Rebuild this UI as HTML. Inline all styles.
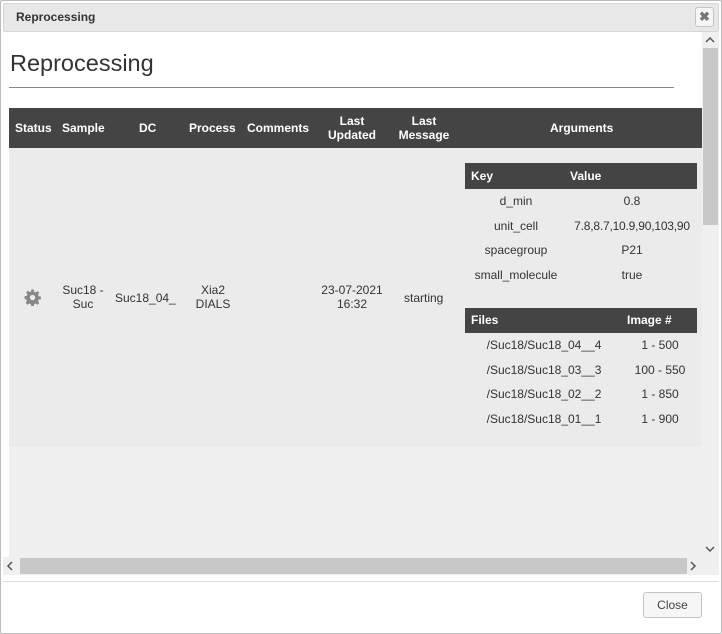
<!DOCTYPE html>
<html><head><meta charset="utf-8"><style>
*{margin:0;padding:0;box-sizing:border-box}
body{width:722px;height:634px;background:#fff;font-family:"Liberation Sans",Arial,sans-serif;font-size:12px;color:#333;position:relative;overflow:hidden}
.a{position:absolute}
.c{text-align:center}
.hd{color:#fff;font-weight:bold}
</style></head><body>
<div class="a" style="left:0;top:0;width:722px;height:634px;border:1px solid #bbb;border-radius:2px"></div>
<div class="a" style="left:3px;top:3px;width:716px;height:29px;background:#e8e8e8;border:1px solid #d6d6d6;border-radius:2px"></div>
<div class="a" style="left:16px;top:10px;font-size:12px;font-weight:bold;color:#333">Reprocessing</div>
<div class="a" style="left:695px;top:7px;width:19px;height:20px;border:1px solid #c5c5c5;border-radius:3px;background:#f6f6f6;color:#777;font-size:13px;font-weight:bold;text-align:center;line-height:17px">✖</div>

<div class="a" style="left:10px;top:50px;font-size:23.5px;color:#333">Reprocessing</div>
<div class="a" style="left:9px;top:87px;width:665px;height:1px;background:#888"></div>

<div class="a" style="left:9px;top:148px;width:693px;height:409px;background:#f0f0f0"></div>
<div class="a" style="left:9px;top:108px;width:693px;height:40px;background:#444"></div>
<div class="a hd" style="left:15px;top:121px">Status</div>
<div class="a hd" style="left:62px;top:121px">Sample</div>
<div class="a hd" style="left:139px;top:121px">DC</div>
<div class="a hd" style="left:189px;top:121px">Process</div>
<div class="a hd" style="left:247px;top:121px">Comments</div>
<div class="a hd c" style="left:322px;top:114px;width:60px;line-height:14px">Last<br>Updated</div>
<div class="a hd c" style="left:394px;top:114px;width:60px;line-height:14px">Last<br>Message</div>
<div class="a hd" style="left:550px;top:121px">Arguments</div>

<div class="a" style="left:9px;top:148px;width:693px;height:299px;background:#ebebeb"></div>
<svg class="a" style="left:24px;top:289px" width="17" height="17" viewBox="0 0 16 16"><path fill="#888" d="M6.8 0.5h2.4l.4 2.1 1.3.6 1.8-1.2 1.7 1.7-1.2 1.8.6 1.3 2.1.4v2.4l-2.1.4-.6 1.3 1.2 1.8-1.7 1.7-1.8-1.2-1.3.6-.4 2.1H6.8l-.4-2.1-1.3-.6-1.8 1.2-1.7-1.7 1.2-1.8-.6-1.3L0.5 9.2V6.8l2.1-.4.6-1.3-1.2-1.8 1.7-1.7 1.8 1.2 1.3-.6z M8 5.5a2.5 2.5 0 1 0 0 5a2.5 2.5 0 1 0 0-5z"/></svg>
<div class="a c" style="left:52px;top:283px;width:62px;line-height:14px">Suc18 -<br>Suc</div>
<div class="a" style="left:115px;top:291px">Suc18_04_</div>
<div class="a c" style="left:183px;top:283px;width:60px;line-height:14px">Xia2<br>DIALS</div>
<div class="a c" style="left:312px;top:283px;width:80px;line-height:14px">23-07-2021<br>16:32</div>
<div class="a" style="left:404px;top:291px">starting</div>

<div class="a" style="left:465px;top:163px;width:232px;height:26px;background:#444"></div>
<div class="a hd" style="left:471px;top:169px">Key</div>
<div class="a hd" style="left:570px;top:169px">Value</div>
<div class="a c" style="left:465px;top:194px;width:102px">d_min</div>
<div class="a c" style="left:567px;top:194px;width:130px">0.8</div>
<div class="a c" style="left:465px;top:219px;width:102px">unit_cell</div>
<div class="a c" style="left:567px;top:219px;width:130px;letter-spacing:-0.2px">7.8,8.7,10.9,90,103,90</div>
<div class="a c" style="left:465px;top:243px;width:102px">spacegroup</div>
<div class="a c" style="left:567px;top:243px;width:130px">P21</div>
<div class="a c" style="left:465px;top:268px;width:102px">small_molecule</div>
<div class="a c" style="left:567px;top:268px;width:130px">true</div>

<div class="a" style="left:465px;top:308px;width:232px;height:25px;background:#444"></div>
<div class="a hd" style="left:471px;top:313px">Files</div>
<div class="a hd" style="left:627px;top:313px">Image #</div>
<div class="a c" style="left:474px;top:338px;width:140px">/Suc18/Suc18_04__4</div>
<div class="a c" style="left:620px;top:338px;width:80px">1 - 500</div>
<div class="a c" style="left:474px;top:363px;width:140px">/Suc18/Suc18_03__3</div>
<div class="a c" style="left:620px;top:363px;width:80px">100 - 550</div>
<div class="a c" style="left:474px;top:387px;width:140px">/Suc18/Suc18_02__2</div>
<div class="a c" style="left:620px;top:387px;width:80px">1 - 850</div>
<div class="a c" style="left:474px;top:412px;width:140px">/Suc18/Suc18_01__1</div>
<div class="a c" style="left:620px;top:412px;width:80px">1 - 900</div>

<div class="a" style="left:702px;top:32px;width:17px;height:525px;background:#f0f0f0"></div>
<div class="a" style="left:703px;top:48px;width:15px;height:177px;background:#c8c8c8"></div>
<svg class="a" style="left:705px;top:36px" width="10" height="8"><path d="M1 6l4-4 4 4" stroke="#555" stroke-width="1.5" fill="none"/></svg>
<svg class="a" style="left:705px;top:545px" width="10" height="8"><path d="M1 2l4 4 4-4" stroke="#555" stroke-width="1.5" fill="none"/></svg>
<div class="a" style="left:3px;top:557px;width:716px;height:18px;background:#f0f0f0"></div>
<div class="a" style="left:20px;top:558px;width:667px;height:16px;background:#c8c8c8"></div>
<svg class="a" style="left:6px;top:561px" width="8" height="10"><path d="M6 1L2 5l4 4" stroke="#555" stroke-width="1.5" fill="none"/></svg>
<svg class="a" style="left:689px;top:561px" width="8" height="10"><path d="M2 1l4 4-4 4" stroke="#555" stroke-width="1.5" fill="none"/></svg>

<div class="a" style="left:3px;top:581px;width:716px;height:1px;background:#ddd"></div>
<div class="a c" style="left:643px;top:592px;width:59px;height:26px;border:1px solid #c5c5c5;border-radius:3px;background:#f6f6f6;line-height:24px;color:#454545">Close</div>
</body></html>
